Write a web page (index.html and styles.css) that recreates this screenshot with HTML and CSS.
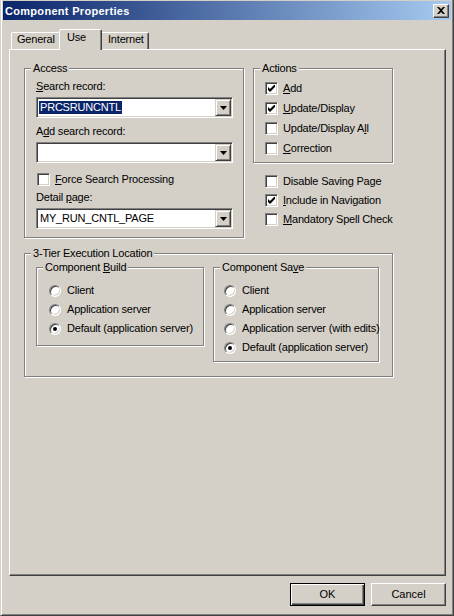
FILE: index.html
```html
<!DOCTYPE html>
<html lang="en">
<head>
    <meta charset="UTF-8">
    <title>Component Properties</title>
    <link rel="stylesheet" href="styles.css">
</head>
<body>
    <div class="window">
        <div class="titlebar">
            <span class="title">Component Properties</span>
            <button class="close-btn" type="button" aria-label="Close">
                <svg width="8" height="7" viewBox="0 0 8 7"><path d="M0 0h2l2 2 2-2h2L5 3.5 8 7H6L4 5 2 7H0l3-3.5z"/></svg>
            </button>
        </div>

        <div class="client">
            <div class="tabs">
                <div class="tab tab-general">General</div>
                <div class="tab tab-use active">Use</div>
                <div class="tab tab-internet">Internet</div>
            </div>

            <div class="panel">
                <div class="top-row">
                    <fieldset class="group access">
                        <legend>Access</legend>
                        <div class="access-body">
                            <div class="field-label"><u>S</u>earch record:</div>
                            <div class="combo">
                                <span class="combo-value"><span class="selected">PRCSRUNCNTL</span></span>
                                <span class="combo-btn"><svg width="7" height="4" viewBox="0 0 7 4"><path d="M0 0h7L3.5 4z"/></svg></span>
                            </div>
                            <div class="field-label gap-lg">A<u>d</u>d search record:</div>
                            <div class="combo">
                                <span class="combo-value"></span>
                                <span class="combo-btn"><svg width="7" height="4" viewBox="0 0 7 4"><path d="M0 0h7L3.5 4z"/></svg></span>
                            </div>
                            <div class="check-row force">
                                <span class="checkbox"></span>
                                <span><u>F</u>orce Search Processing</span>
                            </div>
                            <div class="field-label gap-sm">Detail <u>p</u>age:</div>
                            <div class="combo">
                                <span class="combo-value">MY_RUN_CNTL_PAGE</span>
                                <span class="combo-btn"><svg width="7" height="4" viewBox="0 0 7 4"><path d="M0 0h7L3.5 4z"/></svg></span>
                            </div>
                        </div>
                    </fieldset>

                    <div class="side">
                        <fieldset class="group actions">
                            <legend>Actions</legend>
                            <div class="actions-body">
                                <div class="check-row">
                                    <span class="checkbox checked"><svg width="7" height="7" viewBox="0 0 7 7"><path d="M0 2l2 2 5-5v3L2 7 0 5z"/></svg></span>
                                    <span><u>A</u>dd</span>
                                </div>
                                <div class="check-row">
                                    <span class="checkbox checked"><svg width="7" height="7" viewBox="0 0 7 7"><path d="M0 2l2 2 5-5v3L2 7 0 5z"/></svg></span>
                                    <span><u>U</u>pdate/Display</span>
                                </div>
                                <div class="check-row">
                                    <span class="checkbox"></span>
                                    <span>Update/Display A<u>l</u>l</span>
                                </div>
                                <div class="check-row">
                                    <span class="checkbox"></span>
                                    <span><u>C</u>orrection</span>
                                </div>
                            </div>
                        </fieldset>

                        <div class="options">
                            <div class="check-row">
                                <span class="checkbox"></span>
                                <span>Disable Saving Page</span>
                            </div>
                            <div class="check-row">
                                <span class="checkbox checked"><svg width="7" height="7" viewBox="0 0 7 7"><path d="M0 2l2 2 5-5v3L2 7 0 5z"/></svg></span>
                                <span><u>I</u>nclude in Navigation</span>
                            </div>
                            <div class="check-row">
                                <span class="checkbox"></span>
                                <span><u>M</u>andatory Spell Check</span>
                            </div>
                        </div>
                    </div>
                </div>

                <fieldset class="group tier">
                    <legend>3-Tier Execution Location</legend>
                    <div class="tier-body">
                        <fieldset class="group build">
                            <legend>Component <u>B</u>uild</legend>
                            <div class="build-body">
                                <div class="radio-row"><span class="radio"></span><span>Client</span></div>
                                <div class="radio-row"><span class="radio"></span><span>Application server</span></div>
                                <div class="radio-row"><span class="radio on"></span><span>Default (application server)</span></div>
                            </div>
                        </fieldset>
                        <fieldset class="group save">
                            <legend>Component Sa<u>v</u>e</legend>
                            <div class="save-body">
                                <div class="radio-row"><span class="radio"></span><span>Client</span></div>
                                <div class="radio-row"><span class="radio"></span><span>Application server</span></div>
                                <div class="radio-row"><span class="radio"></span><span>Application server (with edits)</span></div>
                                <div class="radio-row"><span class="radio on"></span><span>Default (application server)</span></div>
                            </div>
                        </fieldset>
                    </div>
                </fieldset>
            </div>

            <div class="buttons">
                <button class="btn btn-default" type="button">OK</button>
                <button class="btn" type="button">Cancel</button>
            </div>
        </div>
    </div>
</body>
</html>
```

FILE: styles.css
```css
* {
    box-sizing: border-box;
}

body {
    margin: 0;
    font-family: "Liberation Sans", Arial, sans-serif;
    font-size: 11px;
    line-height: 13px;
    letter-spacing: -0.2px;
    color: #000;
    background-color: #d4d0c8;
}

u {
    text-decoration: underline;
    text-underline-offset: 1px;
}

/* window frame */
.window {
    width: 454px;
    height: 616px;
    display: flex;
    flex-direction: column;
    background-color: #d4d0c8;
    border-left: 1px solid #d4d0c8;
    border-right: 1px solid #404040;
    border-bottom: 1px solid #404040;
    box-shadow: inset 1px 0 #fff, inset -1px -1px #808080;
    padding: 1px 2px 2px 2px;
}

.titlebar {
    height: 19px;
    display: flex;
    align-items: center;
    padding-left: 2px;
    background: linear-gradient(to right, #0a246a, #a6caf0);
}

.title {
    color: #fff;
    font-weight: bold;
    letter-spacing: 0.3px;
    padding-top: 1px;
}

.close-btn {
    margin-left: auto;
    margin-right: 2px;
    width: 16px;
    height: 14px;
    padding: 0;
    display: flex;
    align-items: center;
    justify-content: center;
    background-color: #d4d0c8;
    border: 1px solid;
    border-color: #fff #404040 #404040 #fff;
    box-shadow: inset -1px -1px #808080;
}

.close-btn svg {
    display: block;
    margin-left: -1px;
}

.client {
    flex: 1;
    display: flex;
    flex-direction: column;
    padding: 9px 5px 7px 6px;
}

/* tab strip */
.tabs {
    height: 20px;
    display: flex;
    align-items: flex-end;
    padding-left: 2px;
    position: relative;
    z-index: 1;
}

.tab {
    height: 17px;
    border: 1px solid;
    border-bottom: 0;
    border-color: #fff #404040 transparent #fff;
    border-radius: 2px 2px 0 0;
    box-shadow: inset -1px 0 #808080;
    background-color: #d4d0c8;
    white-space: nowrap;
}

.tab-general {
    width: 50px;
    padding-left: 5px;
}

.tab-use {
    width: 43px;
    margin-left: -2px;
    padding-left: 7px;
}

.tab-internet {
    width: 49px;
    margin-left: -2px;
    padding-left: 7px;
}

.tab.active {
    height: 21px;
    margin-bottom: -1px;
    padding-top: 1px;
    position: relative;
    z-index: 2;
}

.panel {
    flex: 1;
    border: 1px solid;
    border-color: #fff #404040 #404040 #fff;
    box-shadow: inset -1px -1px #808080;
    padding: 12px 0 0 14px;
}

/* group boxes */
.group {
    margin: 0;
    padding: 0;
    min-width: 0;
    border: 1px solid #808080;
    box-shadow: 1px 1px 0 #fff, inset 1px 1px 0 #fff;
}

.group > legend {
    margin-left: 6px;
    padding: 0 2px;
    line-height: 13px;
    background-color: #d4d0c8;
    white-space: nowrap;
}

.top-row {
    display: flex;
    align-items: flex-start;
}

.access {
    width: 220px;
}

.access-body {
    display: flex;
    flex-direction: column;
    padding: 5px 10px 8px 11px;
}

.field-label {
    height: 13px;
}

.gap-lg {
    margin-top: 7px;
}

.gap-sm {
    margin-top: 5px;
}

.combo {
    margin-top: 4px;
    height: 21px;
    display: flex;
    align-items: center;
    background-color: #fff;
    border: 1px solid;
    border-color: #808080 #fff #fff #808080;
    box-shadow: inset 1px 1px #404040, inset -1px -1px #d4d0c8;
    padding: 1px 1px 1px 2px;
}

.combo-value {
    flex: 1;
    height: 13px;
    white-space: nowrap;
}

.combo-value .selected {
    display: inline-block;
    background-color: #0a246a;
    color: #fff;
    padding: 0 1px;
}

.combo-value:not(:empty) {
    padding-left: 1px;
}

.combo-value:has(.selected) {
    padding-left: 0;
}

.combo-btn {
    width: 16px;
    height: 17px;
    display: flex;
    align-items: center;
    justify-content: center;
    background-color: #d4d0c8;
    border: 1px solid;
    border-color: #d4d0c8 #404040 #404040 #d4d0c8;
    box-shadow: inset 1px 1px #fff, inset -1px -1px #808080;
}

.combo-btn svg {
    display: block;
}

/* check boxes */
.check-row {
    height: 13px;
    display: flex;
    align-items: center;
    gap: 5px;
    white-space: nowrap;
}

.force {
    margin-top: 10px;
    margin-left: 1px;
}

.checkbox {
    flex: none;
    width: 13px;
    height: 13px;
    display: flex;
    align-items: center;
    justify-content: center;
    background-color: #fff;
    border: 1px solid;
    border-color: #808080 #fff #fff #808080;
    box-shadow: inset 1px 1px #404040, inset -1px -1px #d4d0c8;
}

.checkbox svg {
    display: block;
}

.side {
    margin-left: 9px;
}

.actions {
    width: 140px;
}

.actions-body {
    display: flex;
    flex-direction: column;
    gap: 7px;
    padding: 7px 0 7px 11px;
}

.options {
    display: flex;
    flex-direction: column;
    gap: 6px;
    margin-top: 12px;
    padding-left: 12px;
}

/* execution location */
.tier {
    width: 369px;
    margin-top: 9px;
}

.tier-body {
    display: flex;
    align-items: flex-start;
    padding: 1px 0 14px 11px;
}

.build {
    width: 168px;
}

.save {
    width: 166px;
    margin-left: 9px;
}

.build-body,
.save-body {
    display: flex;
    flex-direction: column;
    gap: 6px;
}

.build-body {
    padding: 10px 0 10px 12px;
}

.save-body {
    padding: 10px 0 7px 10px;
}

.radio-row {
    height: 13px;
    display: flex;
    align-items: center;
    gap: 6px;
    white-space: nowrap;
}

.radio {
    flex: none;
    position: relative;
    width: 12px;
    height: 12px;
    border-radius: 50%;
    background-color: #fff;
    border: 1px solid;
    border-color: #808080 #fff #fff #808080;
    box-shadow: inset 1px 1px #404040, inset -1px -1px #d4d0c8;
}

.radio.on::after {
    content: "";
    position: absolute;
    left: 3px;
    top: 3px;
    width: 4px;
    height: 4px;
    border-radius: 50%;
    background-color: #000;
}

/* dialog buttons */
.buttons {
    display: flex;
    justify-content: flex-end;
    gap: 6px;
    margin-top: 7px;
}

.btn {
    width: 75px;
    height: 23px;
    padding: 0;
    font: inherit;
    color: #000;
    background-color: #d4d0c8;
    border: 1px solid;
    border-color: #fff #404040 #404040 #fff;
    box-shadow: inset -1px -1px #808080;
}

.btn-default {
    border-color: #000;
    box-shadow: inset 1px 1px #fff, inset -1px -1px #404040, inset -2px -2px #808080;
}
```
